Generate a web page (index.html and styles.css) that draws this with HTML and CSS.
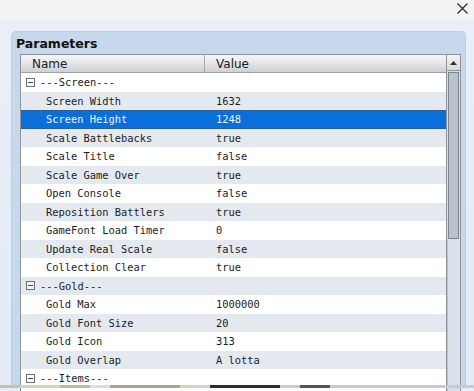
FILE: index.html
```html
<!DOCTYPE html>
<html>
<head>
<meta charset="utf-8">
<link rel="stylesheet" href="styles.css">
</head>
<body>
<div class="top">
  <svg class="close" width="11" height="11" viewBox="0 0 11 11"><path d="M0.5 0.5L10.5 10.5M10.5 0.5L0.5 10.5" stroke="#2a2a2a" stroke-width="1.2" fill="none"/></svg>
</div>
<div class="main">
  <div class="panel">
    <div class="title">Parameters</div>
    <div class="grid">
      <div class="table">
        <div class="head">
          <div class="hname">Name</div>
          <div class="hval">Value</div>
        </div>
        <div class="row grp"><span class="tog"></span><span class="gname">---Screen---</span></div>
        <div class="row alt"><span class="n">Screen Width</span><span class="v">1632</span></div>
        <div class="row sel"><span class="n">Screen Height</span><span class="v">1248</span></div>
        <div class="row alt"><span class="n">Scale Battlebacks</span><span class="v">true</span></div>
        <div class="row"><span class="n">Scale Title</span><span class="v">false</span></div>
        <div class="row alt"><span class="n">Scale Game Over</span><span class="v">true</span></div>
        <div class="row"><span class="n">Open Console</span><span class="v">false</span></div>
        <div class="row alt"><span class="n">Reposition Battlers</span><span class="v">true</span></div>
        <div class="row"><span class="n">GameFont Load Timer</span><span class="v">0</span></div>
        <div class="row alt"><span class="n">Update Real Scale</span><span class="v">false</span></div>
        <div class="row"><span class="n">Collection Clear</span><span class="v">true</span></div>
        <div class="row alt grp"><span class="tog"></span><span class="gname">---Gold---</span></div>
        <div class="row"><span class="n">Gold Max</span><span class="v">1000000</span></div>
        <div class="row alt"><span class="n">Gold Font Size</span><span class="v">20</span></div>
        <div class="row"><span class="n">Gold Icon</span><span class="v">313</span></div>
        <div class="row alt"><span class="n">Gold Overlap</span><span class="v">A lotta</span></div>
        <div class="row grp"><span class="tog"></span><span class="gname">---Items---</span></div>
      </div>
      <div class="scroll">
        <div class="sbtn"><svg width="7" height="4" viewBox="0 0 7 4"><path d="M0 4L3.5 0L7 4Z" fill="#333"/></svg></div>
        <div class="thumb"></div>
        <div class="track"></div>
      </div>
    </div>
  </div>
</div>
<div class="strip"></div>
</body>
</html>
```

FILE: styles.css
```css
html, body {
  margin: 0;
  padding: 0;
  width: 474px;
  height: 391px;
  overflow: hidden;
  background: #e6eef8;
  font-family: "DejaVu Sans", sans-serif;
}
.top {
  height: 20px;
  background: #f3f3f3;
  position: relative;
}
.close {
  position: absolute;
  right: 6px;
  top: 3px;
}
.main {
  background: linear-gradient(#e8eff9, #e3ebf6);
  padding: 11px 8px 0 11px;
  height: 357px;
}
.panel {
  background: #c7d8ec;
  border-radius: 5px 5px 0 0;
  padding: 3px 4px 0 8px;
  height: 354px;
  box-sizing: border-box;
  border: 1px solid #bccde2;
  border-bottom: none;
}
.title {
  font-weight: bold;
  font-size: 12.5px;
  color: #111;
  height: 19px;
  line-height: 18px;
  margin-left: -4px;
}
.grid {
  display: flex;
  border: 1px solid #8d949b;
  border-bottom: none;
  background: #fff;
  height: 340px;
  overflow: hidden;
}
.table {
  flex: 1;
  overflow: hidden;
}
.head {
  display: flex;
  height: 17px;
  background: linear-gradient(#f6f6f6, #e3e3e3 55%, #cfd0d2);
  border-bottom: 1px solid #9ca2a8;
  font-size: 12px;
  color: #1a1a1a;
  line-height: 18px;
}
.hname {
  width: 172px;
  padding-left: 11px;
  border-right: 1px solid #a6abb0;
}
.hval {
  padding-left: 11px;
}
.row {
  display: flex;
  align-items: center;
  height: 18.5px;
  font-family: "DejaVu Sans Mono", monospace;
  font-size: 10.4px;
  color: #1c1c1c;
  box-sizing: border-box;
  white-space: nowrap;
}
.row.alt {
  background: #e4e9f0;
}
.row.sel {
  background: #0a6fd9;
  color: #eef4ff;
  border-top: 1px solid #2a5d9c;
  border-bottom: 1px solid #2a5d9c;
}
.n {
  width: 170px;
  padding-left: 25px;
  flex: none;
}
.tog {
  width: 7px;
  height: 7px;
  border: 1px solid #6c7075;
  margin-left: 5px;
  margin-right: 5px;
  position: relative;
  flex: none;
  background: #fff;
  box-sizing: content-box;
}
.row.alt .tog {
  background: #f1f4f8;
}
.tog::after {
  content: "";
  position: absolute;
  left: 1px;
  right: 1px;
  top: 3px;
  height: 1px;
  background: #444;
}
.scroll {
  width: 13px;
  border-left: 1px solid #8d949b;
  display: flex;
  flex-direction: column;
  background: #d6dee8;
}
.sbtn {
  height: 15px;
  background: linear-gradient(#f5f5f5, #d7d9dc);
  border-bottom: 1px solid #8d949b;
  display: flex;
  align-items: center;
  justify-content: center;
}
.thumb {
  height: 165px;
  background: #bac3cd;
  border: 1px solid #7c848c;
  margin: 1px 1px 0 1px;
}
.track {
  flex: 1;
  background: #d8e0ea;
  border-left: 1px solid #b8c2cd;
}
.strip {
  height: 3px;
  margin-top: -3px;
  position: relative;
  background: linear-gradient(90deg, #c8c2b0 0 20px, #d8d2c0 20px 60px, #bfb8a8 60px 90px, #ddd 90px 110px, #b0a48a 110px 180px, #d8d2c6 180px 210px, #2a2f2c 210px 280px, #ccc 280px 300px, #555 300px 330px, #c8ccd2 330px 474px);
}
```
